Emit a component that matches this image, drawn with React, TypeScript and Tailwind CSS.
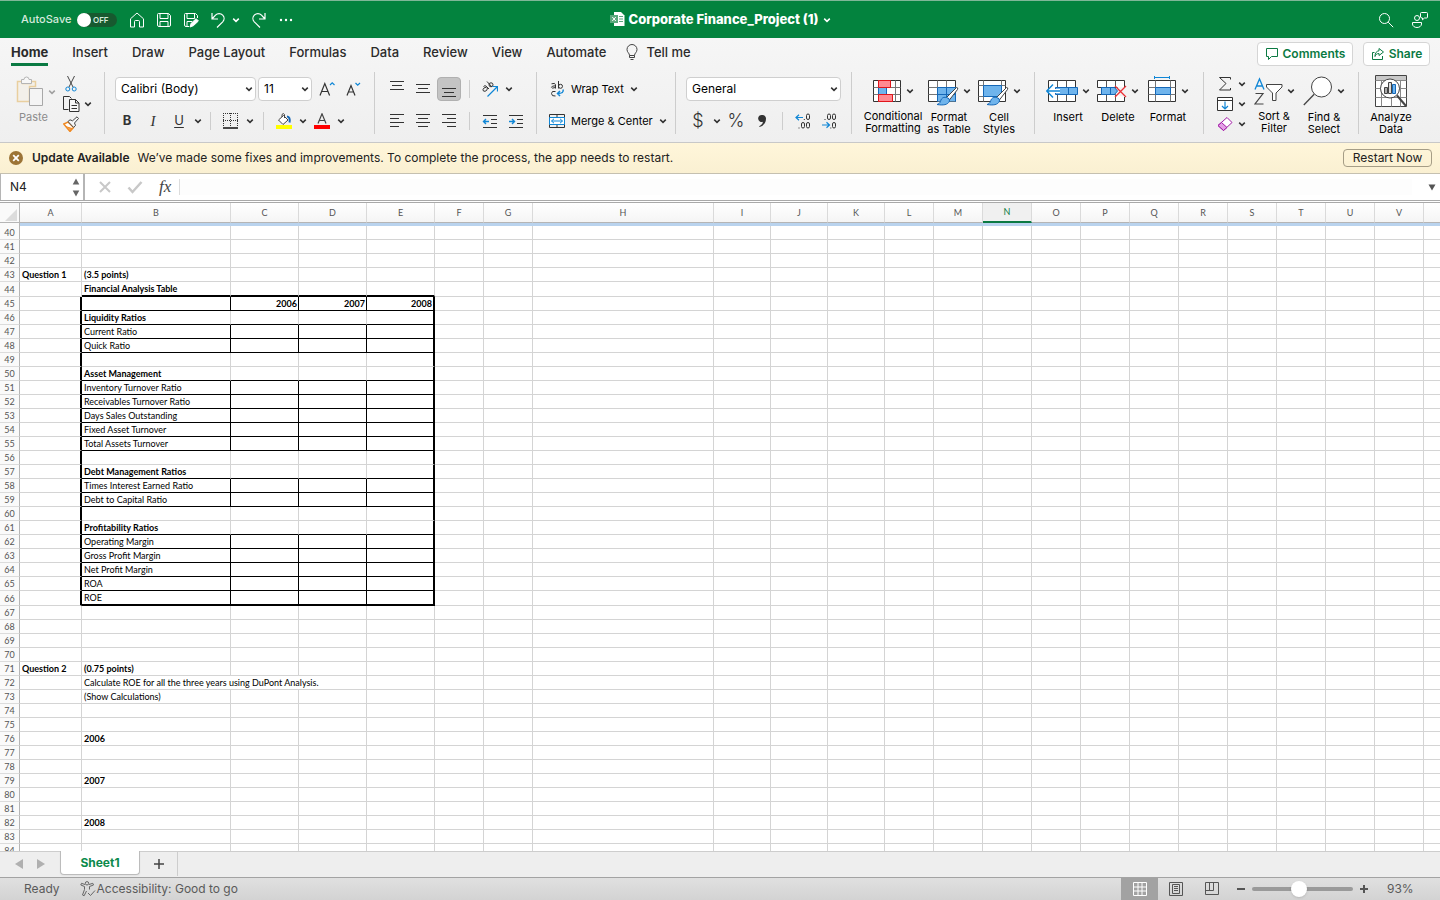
import type {ReactNode} from 'react';
import clsx from 'clsx';

const tabs = ['Home', 'Insert', 'Draw', 'Page Layout', 'Formulas', 'Data', 'Review', 'View', 'Automate'];

const columns = [
    {name: 'A', width: 'w-[62px]'},
    {name: 'B', width: 'w-[149px]'},
    {name: 'C', width: 'w-[68px]'},
    {name: 'D', width: 'w-[68px]'},
    {name: 'E', width: 'w-[68px]'},
    {name: 'F', width: 'w-[49px]'},
    {name: 'G', width: 'w-[49px]'},
    {name: 'H', width: 'w-[181px]'},
    {name: 'I', width: 'w-[57px]'},
    {name: 'J', width: 'w-[57px]'},
    {name: 'K', width: 'w-[57px]'},
    ...['L', 'M', 'N', 'O', 'P', 'Q', 'R', 'S', 'T', 'U', 'V'].map((name) => ({name, width: 'w-[49px]'})),
    {name: '', width: 'w-auto'},
];

const rows = Array.from({length: 45}, (_, i) => i + 40);

const cells: Record<string, string> = {
    A43: 'Question 1',
    B43: '(3.5 points)',
    B44: 'Financial Analysis Table',
    C45: '2006',
    D45: '2007',
    E45: '2008',
    B46: 'Liquidity Ratios',
    B47: 'Current Ratio',
    B48: 'Quick Ratio',
    B50: 'Asset Management',
    B51: 'Inventory Turnover Ratio',
    B52: 'Receivables Turnover Ratio',
    B53: 'Days Sales Outstanding',
    B54: 'Fixed Asset Turnover',
    B55: 'Total Assets Turnover',
    B57: 'Debt Management Ratios',
    B58: 'Times Interest Earned Ratio',
    B59: 'Debt to Capital Ratio',
    B61: 'Profitability Ratios',
    B62: 'Operating Margin',
    B63: 'Gross Profit Margin',
    B64: 'Net Profit Margin',
    B65: 'ROA',
    B66: 'ROE',
    A71: 'Question 2',
    B71: '(0.75 points)',
    B72: 'Calculate ROE for all the three years using DuPont Analysis.',
    B73: '(Show Calculations)',
    B76: '2006',
    B79: '2007',
    B82: '2008',
};

const boldRows = [43, 44, 45, 46, 50, 57, 61, 71, 76, 79, 82];
const headingRows = [46, 49, 50, 56, 57, 60, 61];
const openRows = [49, 56, 60];

function cellBorder(col: string, row: number) {
    const inTable = row >= 45 && row <= 66;
    const tableCol = 'BCDE'.includes(col) && col !== '';
    let right = col === '' ? '' : 'border-r border-r-[#d4d4d4]';
    let bottom = 'border-b border-b-[#d4d4d4]';
    if (inTable && (col === 'A' || col === 'E')) {
        right = 'border-r-2 border-r-black';
    } else if (inTable && tableCol && !headingRows.includes(row)) {
        right = 'border-r border-r-black';
    }
    if (tableCol && (row === 44 || row === 66)) {
        bottom = 'border-b-2 border-b-black';
    } else if (inTable && tableCol && !openRows.includes(row)) {
        bottom = 'border-b border-b-black';
    }
    return clsx(right, bottom);
}

function Caret({className = 'text-[#333]'}: {className?: string}) {
    return (
        <svg className={clsx('h-2 w-2 shrink-0', className)} viewBox="0 0 8 8" fill="none" stroke="currentColor" strokeWidth="1.5">
            <path d="M1.2 2.6 4 5.4 6.8 2.6"/>
        </svg>
    );
}

function CaretButton({label}: {label: string}) {
    return (
        <button aria-label={label} className="flex h-6 w-3.5 items-center justify-center">
            <Caret/>
        </button>
    );
}

function ToolButton({label, active, children}: {label: string; active?: boolean; children: ReactNode}) {
    return (
        <button
            aria-label={label}
            className={clsx('flex h-6 w-6 shrink-0 items-center justify-center rounded-sm text-[#333]', active && 'border border-[#b0b0b0] bg-[#c4c4c4]')}
        >
            {children}
        </button>
    );
}

function Divider() {
    return <div className="h-[18px] w-px shrink-0 bg-[#cdcdcd]"/>;
}

function Group({className, children}: {className: string; children: ReactNode}) {
    return <div className={clsx('flex h-[62px] shrink-0 border-r border-[#cdcdcd]', className)}>{children}</div>;
}

function Picker({label, value, className}: {label: string; value: string; className: string}) {
    return (
        <div className={clsx('relative', className)}>
            <select
                aria-label={label}
                defaultValue={value}
                className="h-6 w-full appearance-none rounded-sm border border-[#cfcfcf] bg-white px-[5px] text-xs text-black"
            >
                <option>{value}</option>
            </select>
            <Caret className="pointer-events-none absolute top-2 right-[3px] text-[#333]"/>
        </div>
    );
}

function BigButton({lines, width, caret = true, children}: {lines: string[]; width: string; caret?: boolean; children: ReactNode}) {
    return (
        <button className={clsx('flex shrink-0 flex-col items-center pt-1', width)}>
            <span className="flex h-[30px] items-center justify-center gap-1">
                {children}
                {caret && <Caret/>}
            </span>
            <span className="mt-[5px] flex flex-col text-[11px] leading-3 whitespace-nowrap text-black">
                {lines.map((line) => <span key={line}>{line}</span>)}
            </span>
        </button>
    );
}

function AlignIcon({lines}: {lines: number[][]}) {
    return (
        <svg className="h-4 w-4" viewBox="0 0 16 16" stroke="#333" strokeWidth="1">
            {lines.map(([x1, x2, y]) => <path key={y} d={`M${x1} ${y}.5H${x2}`}/>)}
        </svg>
    );
}

function IndentIcon({out}: {out?: boolean}) {
    return (
        <svg className="h-4 w-4" viewBox="0 0 16 16" fill="none" stroke="#333">
            <path d="M1 2.5h14M9 6.5h6M9 10.5h6M1 14.5h14"/>
            <path d={out ? 'M7 8.5H1.5M4 6 1.5 8.5 4 11' : 'M1 8.5h5.5M4 6l2.5 2.5L4 11'} stroke="#0f86d6" strokeWidth="1.4"/>
        </svg>
    );
}

function TitleBar() {
    return (
        <header className="flex h-[38px] shrink-0 items-center border-t border-[#7fb797] bg-[#03833e] text-white">
            <div className="flex flex-1 items-center">
                <label htmlFor="autosave" className="ml-[21px] w-14 shrink-0 text-[11px] font-medium text-[#d5eadd]">AutoSave</label>
                <span className="relative flex h-3.5 w-10 shrink-0 items-center rounded-full bg-[#17592f]">
                    <input id="autosave" type="checkbox" className="absolute inset-0 appearance-none"/>
                    <span className="h-3.5 w-3.5 rounded-full bg-white"/>
                    <span className="ml-0.5 text-[8px] font-semibold text-[#d5eadd]">OFF</span>
                </span>
                <div className="ml-3 flex items-center gap-[11px]">
                    <button aria-label="Home">
                        <svg className="h-4 w-4" viewBox="0 0 16 16" fill="none" stroke="white">
                            <path d="M1.5 6.8 8 1l6.5 5.800V15h-4V9.500a1 1 0 0 0-1-1h-3a1 1 0 0 0-1 1V15h-4Z"/>
                        </svg>
                    </button>
                    <button aria-label="Save">
                        <svg className="h-4 w-4" viewBox="0 0 16 16" fill="none" stroke="white">
                            <path d="M2.5 1.5h10l2 2v9.500a1.500 1.500 0 0 1-1.500 1.500H3A1.500 1.500 0 0 1 1.500 13V2.500a1 1 0 0 1 1-1ZM4 1.500v5h8v-5M4 14.500v-5h8v5"/>
                        </svg>
                    </button>
                    <button aria-label="Save As">
                        <svg className="h-4 w-4" viewBox="0 0 16 16" fill="none" stroke="white">
                            <path d="M6 14.500H3A1.500 1.500 0 0 1 1.500 13V2.500a1 1 0 0 1 1-1h10l2 2V6M4 1.500v5h7.500v-5M4 14.500v-5h5"/>
                            <path d="m7 15 1.200-3.800 5-4.500 2.200 2.300-5 4.700Z" fill="white"/>
                        </svg>
                    </button>
                    <button aria-label="Undo" className="flex items-center gap-1.5">
                        <svg className="h-4 w-4" viewBox="0 0 16 16" fill="none" stroke="white" strokeWidth="1.2">
                            <path d="M2 1v6h6M2 7l3.500-3.800a5 5 0 0 1 7.200 0c2 2 1.700 4.800 0 6.600L7 15.500"/>
                        </svg>
                        <Caret className="text-white"/>
                    </button>
                    <button aria-label="Redo">
                        <svg className="h-4 w-4" viewBox="0 0 16 16" fill="none" stroke="white" strokeWidth="1.2">
                            <path d="M14 1v6H8M14 7l-3.500-3.800a5 5 0 0 0-7.200 0c-2 2-1.700 4.800 0 6.600L9 15.500"/>
                        </svg>
                    </button>
                    <button aria-label="More">
                        <svg className="h-4 w-4" viewBox="0 0 16 16" fill="white">
                            <circle cx="3" cy="8" r="1.2"/>
                            <circle cx="8" cy="8" r="1.2"/>
                            <circle cx="13" cy="8" r="1.2"/>
                        </svg>
                    </button>
                </div>
            </div>
            <button className="flex items-center gap-1 text-[13px] font-extrabold">
                <svg className="h-[15px] w-[15px]" viewBox="0 0 15 15">
                    <path d="M4 0h7l3.500 3.500V14H4Z" fill="#fff"/>
                    <path d="M9 4.500h4M9 7h4M9 9.500h4" stroke="#5aa87c"/>
                    <path d="M0 3h8v8H0Z" fill="#5aa87c"/>
                    <path d="m2.300 5 3.500 4M5.800 5 2.300 9" stroke="#fff"/>
                </svg>
                <span>Corporate Finance_Project (1)</span>
                <Caret className="text-white"/>
            </button>
            <div className="flex flex-1 items-center justify-end gap-[18px]">
                <button aria-label="Search">
                    <svg className="h-4 w-4" viewBox="0 0 16 16" fill="none" stroke="white">
                        <circle cx="6.500" cy="6.500" r="5"/>
                        <path d="m10.200 10.200 5 5"/>
                    </svg>
                </button>
                <button aria-label="Share presence" className="mr-3">
                    <svg className="h-4 w-4" viewBox="0 0 16 16" fill="none" stroke="white">
                        <circle cx="5" cy="6" r="2.500"/>
                        <path d="M.5 10.500h9v1.500c0 2-2 3.500-4.500 3.500S.5 14 .5 12ZM8.500 1.500q0-1 1-1h5q1 0 1 1v3.500q0 1-1 1h-2l-2 1.800V6q-2 0-2-1Z"/>
                    </svg>
                </button>
            </div>
        </header>
    );
}

function RibbonTabs() {
    return (
        <nav className="flex h-8 shrink-0 items-start pr-[10px] pl-[11px] text-[13px] font-medium text-[#2b2b2b]">
            <div className="flex gap-6">
                {tabs.map((tab) => (
                    <a
                        key={tab}
                        href="#"
                        className={clsx('h-7 border-b-[3px] pt-1 leading-5 whitespace-nowrap', tab === 'Home' ? 'border-[#0b7a43] font-bold' : 'border-transparent')}
                    >
                        {tab}
                    </a>
                ))}
            </div>
            <button className="ml-5 flex items-center gap-2 pt-1 leading-5">
                <svg className="h-4 w-3" viewBox="0 0 12 16" fill="none" stroke="#444">
                    <path d="M3.500 11.500C3.500 9 1 8.500 1 5.500a5 5 0 0 1 10 0c0 3-2.500 3.500-2.500 6ZM3.500 11.500v2h5v-2M4.500 15.500h3"/>
                </svg>
                Tell me
            </button>
            <div className="ml-auto flex gap-[10px] pt-1 font-semibold text-[#0b7a43]">
                <button className="flex h-6 w-24 items-center justify-center gap-1 rounded-sm border border-[#d5d5d5] bg-white text-xs">
                    <svg className="h-3.5 w-3.5" viewBox="0 0 14 14" fill="none" stroke="#0b7a43">
                        <path d="M1.500 1.500h11v8h-6l-3 3v-3h-2Z"/>
                    </svg>
                    Comments
                </button>
                <button className="flex h-6 w-[67px] items-center justify-center gap-1 rounded-sm border border-[#d5d5d5] bg-white text-xs">
                    <svg className="h-3.5 w-3.5" viewBox="0 0 14 14" fill="none" stroke="#0b7a43">
                        <path d="M3.500 5.500h-2v7h10V9"/>
                        <path d="M8 1.500 12.500 5 8 8.500v-2C6 6.500 4.500 7.500 4 9.500 4 6 5.500 4 8 3.800Z"/>
                    </svg>
                    Share
                </button>
            </div>
        </nav>
    );
}

function BrushOverlay() {
    return (
        <>
            <path d="M28.500 8.500q2 0 1 2l-8.500 11-3-2.500Z" fill="#fff" stroke="#444"/>
            <path d="M18.500 18.500q3.500.5 3 3.500c-1.500 4-6.500 4.500-12.500 3.500 3.500-1 3-3 4.500-5.500 1.500-1.800 3-2 5-1.500Z" fill="#6fb4ec" stroke="#1568b8"/>
        </>
    );
}

function Ribbon() {
    return (
        <section className="flex h-[73px] shrink-0 overflow-hidden border-b border-[#c8c8c8] pt-0.5 text-[11px]">
            <Group className="w-[105px]">
                <button className="flex w-[59px] flex-col items-end pt-1 text-[#8c8c8c]">
                    <span className="flex h-[31px] items-center">
                        <svg className="h-[31px] w-7" viewBox="0 0 28 31" fill="none">
                            <path d="M1.500 5.500h5v2h8v-2h5v5h-6v15h-12Z" fill="#f3f0ea" stroke="#e9cf9f" strokeWidth="1.5"/>
                            <path d="M5.500 7.500v-4H8a2.500 2.500 0 0 1 5 0h2.500v4Z" fill="#f7f7f7" stroke="#b5b5b5"/>
                            <path d="M13.500 12.500h13v17h-13Z" fill="#f4f4f4" stroke="#a8a8a8"/>
                        </svg>
                        <Caret className="ml-1 mr-[3px] text-[#a0a0a0]"/>
                    </span>
                    <span className="mt-1 mr-[11px] leading-3">Paste</span>
                </button>
                <div className="flex flex-col pt-0.5 pl-1">
                    <button aria-label="Cut" className="flex h-[21px] items-center">
                        <svg className="h-4 w-4" viewBox="0 0 16 16" fill="none" stroke="#444">
                            <path d="M4.500 0 10 11M11.500 0 6 11"/>
                            <circle cx="4.800" cy="13" r="2" stroke="#0f86d6"/>
                            <circle cx="11.200" cy="13" r="2" stroke="#0f86d6"/>
                        </svg>
                    </button>
                    <button aria-label="Copy" className="flex h-[21px] items-center gap-1">
                        <svg className="h-4 w-[17px]" viewBox="0 0 17 16" fill="none" stroke="#333">
                            <path d="M5.500 13.500h-5V.5h6l2 2"/>
                            <path d="M6.500 3.500h6l3.500 3.500v8.500H6.500ZM12.500 3.500V7H16M8.500 9.500H14M8.500 12.500H14" fill="#f7f7f7"/>
                        </svg>
                        <Caret/>
                    </button>
                    <button aria-label="Format Painter" className="flex h-[21px] items-center">
                        <svg className="h-4 w-4" viewBox="0 0 16 16" fill="none">
                            <path d="M.8 8 5 6l5.500 5.500L7 15.500Z" fill="#fff" stroke="#f08a24" strokeWidth="1.4"/>
                            <path d="M2.500 10.500 9 12.500 7 15.200Z" fill="#f6a04a" stroke="#f08a24"/>
                            <path d="M5 5.500 7 3.800l2.500 1L14 .8l1.500 1.700-4 4.500 1 2.500-2 1.800Z" fill="#f7f7f7" stroke="#444"/>
                        </svg>
                    </button>
                </div>
            </Group>

            <Group className="w-[270px] flex-col gap-2 pt-[5px]">
                <div className="flex items-center pl-[10px]">
                    <Picker label="Font" value="Calibri (Body)" className="w-[141px]"/>
                    <Picker label="Font size" value="11" className="ml-0.5 w-[54px]"/>
                    <div className="ml-[3px] flex gap-0.5">
                        <ToolButton label="Increase font size">
                            <svg className="h-4 w-4" viewBox="0 0 16 16" fill="none" stroke="#333" strokeWidth="1.2">
                                <path d="M1 14.500 5.800 2.500l4.800 12M2.700 10.500H9"/>
                                <path d="m11 4 2.200-2.200L15.500 4" stroke="#0f86d6"/>
                            </svg>
                        </ToolButton>
                        <ToolButton label="Decrease font size">
                            <svg className="h-4 w-4" viewBox="0 0 16 16" fill="none" stroke="#333" strokeWidth="1.2">
                                <path d="M2 14.500 6 4.500l4 10M3.500 11H8.500"/>
                                <path d="m10.500 2 2.200 2.200L15 2" stroke="#0f86d6"/>
                            </svg>
                        </ToolButton>
                    </div>
                </div>
                <div className="flex items-center pl-[10px]">
                    <div className="flex gap-0.5">
                        <ToolButton label="Bold"><span className="text-[13px] font-bold">B</span></ToolButton>
                        <ToolButton label="Italic"><span className="font-['Liberation_Serif'] text-[15px] italic">I</span></ToolButton>
                        <ToolButton label="Underline"><span className="text-[13px] underline underline-offset-2">U</span></ToolButton>
                    </div>
                    <CaretButton label="Underline options"/>
                    <div className="ml-[5px]"><Divider/></div>
                    <div className="ml-2 flex">
                        <ToolButton label="Borders">
                            <svg className="h-4 w-4" viewBox="0 0 16 16" fill="none" stroke="#333">
                                <path d="M.5 0v14M7.500 0v14M14.500 0v14M0 .5h15M0 7.500h15" strokeDasharray="1 1"/>
                                <path d="M0 15h15" stroke="#111" strokeWidth="1.500"/>
                            </svg>
                        </ToolButton>
                        <CaretButton label="Border options"/>
                    </div>
                    <div className="ml-1.5"><Divider/></div>
                    <div className="ml-2 flex">
                        <ToolButton label="Fill color">
                            <svg className="h-4 w-4" viewBox="0 0 16 16" fill="none">
                                <path d="M7.500 2.500 12 7l-5 4.500L2.500 7Z" fill="#fff" stroke="#444"/>
                                <path d="M6 4V1.500q1.500-2 2.500 0V5" stroke="#444"/>
                                <path d="M11 3.500q3.500.5 2.500 6" stroke="#1568b8" strokeWidth="2"/>
                                <path d="M0 12h16v4H0Z" fill="#ffff00"/>
                            </svg>
                        </ToolButton>
                        <CaretButton label="Fill color options"/>
                        <ToolButton label="Font color">
                            <svg className="h-4 w-4" viewBox="0 0 16 16" fill="none">
                                <path d="M4 10.500 8 .8l4 9.700M5.500 7.500h5" stroke="#444" strokeWidth="1.200"/>
                                <path d="M0 12h16v4H0Z" fill="#ff0000"/>
                            </svg>
                        </ToolButton>
                        <CaretButton label="Font color options"/>
                    </div>
                </div>
            </Group>

            <Group className="w-[162px] flex-col gap-2 pt-[5px]">
                <div className="flex items-center gap-2 pl-[10px]">
                    <div className="flex gap-0.5">
                        <ToolButton label="Top align"><AlignIcon lines={[[1, 15, 0], [3, 13, 4], [1, 15, 8]]}/></ToolButton>
                        <ToolButton label="Middle align"><AlignIcon lines={[[1, 15, 3], [3, 13, 7], [1, 15, 11]]}/></ToolButton>
                        <ToolButton label="Bottom align" active><AlignIcon lines={[[1, 15, 7], [3, 13, 11], [1, 15, 15]]}/></ToolButton>
                    </div>
                    <Divider/>
                    <div className="flex">
                        <ToolButton label="Orientation">
                            <svg className="h-4 w-4" viewBox="0 0 16 16" fill="none" stroke="#333">
                                <path d="M1.500 5.500q1.500-1.500 2.700-.3L7 8M4.800 6q-3.500.5-3.800 2.500t2 1.800T5.500 6.800"/>
                                <path d="m5 .5 5 5.500"/>
                                <circle cx="9" cy="3.800" r="2"/>
                                <path d="M5.500 15.500 15 6M10.500 5.500H15.500V10.500" stroke="#0f86d6" strokeWidth="1.200"/>
                            </svg>
                        </ToolButton>
                        <CaretButton label="Orientation options"/>
                    </div>
                </div>
                <div className="flex items-center gap-2 pl-[10px]">
                    <div className="flex gap-0.5">
                        <ToolButton label="Align left"><AlignIcon lines={[[1, 15, 1], [1, 10, 5], [1, 15, 9], [1, 10, 13]]}/></ToolButton>
                        <ToolButton label="Center"><AlignIcon lines={[[1, 15, 1], [3, 13, 5], [1, 15, 9], [3, 13, 13]]}/></ToolButton>
                        <ToolButton label="Align right"><AlignIcon lines={[[1, 15, 1], [6, 15, 5], [1, 15, 9], [6, 15, 13]]}/></ToolButton>
                    </div>
                    <Divider/>
                    <div className="flex gap-0.5">
                        <ToolButton label="Decrease indent"><IndentIcon out/></ToolButton>
                        <ToolButton label="Increase indent"><IndentIcon/></ToolButton>
                    </div>
                </div>
            </Group>

            <Group className="w-[139px] flex-col gap-2 pt-[5px] pl-3">
                <button className="flex h-6 items-center gap-1.5 whitespace-nowrap text-black">
                    <svg className="h-4 w-4" viewBox="0 0 16 16" fill="none" stroke="#333">
                        <path d="M2.500 2.800q4-1.300 4 1V7.500M6.500 4.800Q2.500 4.800 2.500 6.300T6.500 6.500M9.500 0v7.500"/>
                        <circle cx="11.500" cy="5.300" r="2"/>
                        <path d="M6.500 10.500Q2.500 9.500 2.500 12.500t4 2.500"/>
                        <path d="M14 8.500q1.500 4-5.500 4M11 10l-2.500 2.500L11 15" stroke="#0f86d6" strokeWidth="1.500"/>
                    </svg>
                    Wrap Text
                    <Caret/>
                </button>
                <button className="flex h-6 items-center gap-1.5 whitespace-nowrap text-black">
                    <svg className="h-4 w-4" viewBox="0 0 16 16" fill="none" stroke="#333">
                        <path d="M.5 1.500h15v13H.5ZM8 1.500v3M8 11.500v3"/>
                        <path d="M.5 4.500h15v7H.5Z" stroke="#0f86d6" fill="#fff"/>
                        <path d="M2.500 8h11M5 5.800 2.500 8 5 10.200M11 5.800 13.500 8 11 10.200" stroke="#0f86d6"/>
                    </svg>
                    Merge &amp; Center
                    <Caret/>
                </button>
            </Group>

            <Group className="w-[176px] flex-col gap-2 pt-[5px] pl-[10px]">
                <Picker label="Number format" value="General" className="w-[155px]"/>
                <div className="flex items-center">
                    <ToolButton label="Currency"><span className="text-lg font-light">$</span></ToolButton>
                    <CaretButton label="Currency options"/>
                    <ToolButton label="Percent"><span className="text-lg font-light">%</span></ToolButton>
                    <div className="ml-0.5">
                        <ToolButton label="Comma style">
                            <svg className="h-4 w-4" viewBox="0 0 16 16" fill="#333">
                                <path d="M8.300 2a3.500 3.500 0 0 1 3.700 3.700c0 4-2.500 7-6.500 8.300l-.3-.8c2.300-1.200 3.500-2.500 3.700-4.500A3.500 3.500 0 1 1 8.300 2Z"/>
                            </svg>
                        </ToolButton>
                    </div>
                    <div className="mx-2"><Divider/></div>
                    <div className="flex gap-0.5">
                        <ToolButton label="Increase decimal">
                            <svg className="h-4 w-4" viewBox="0 0 16 16" fill="none" stroke="#333">
                                <path d="M8 4.500H1M4 1.800 1 4.500l3 2.700" stroke="#0f86d6" strokeWidth="1.200"/>
                                <rect x="11.500" y="1" width="3" height="5.500" rx="1.500"/>
                                <rect x="6.500" y="9.500" width="3" height="5.500" rx="1.500"/>
                                <rect x="11.500" y="9.500" width="3" height="5.500" rx="1.500"/>
                                <path d="M8.800 6.500h1M3.500 15h1"/>
                            </svg>
                        </ToolButton>
                        <ToolButton label="Decrease decimal">
                            <svg className="h-4 w-4" viewBox="0 0 16 16" fill="none" stroke="#333">
                                <path d="M1 12h7M5.500 9.300l3 2.700-3 2.700" stroke="#0f86d6" strokeWidth="1.200"/>
                                <rect x="6.500" y="1" width="3" height="5.500" rx="1.500"/>
                                <rect x="11.500" y="1" width="3" height="5.500" rx="1.500"/>
                                <rect x="11.500" y="9.500" width="3" height="5.500" rx="1.500"/>
                                <path d="M3.500 6.500h1M9.300 15h1"/>
                            </svg>
                        </ToolButton>
                    </div>
                </div>
            </Group>

            <Group className="w-[183px] pl-[10px]">
                <BigButton lines={['Conditional', 'Formatting']} width="w-[62px]">
                    <svg className="h-6 w-[29px]" viewBox="0 -1 29 24" fill="none">
                        <path d="M.5.5h27v21H.5Z" fill="#fff" stroke="#333"/>
                        <path d="M5.500.5v21M22.500.5v21M.5 7.500h27M.5 14.500h27" stroke="#777"/>
                        <path d="M5.500 7.500h8v7h-8Z" fill="#6fb4ec" stroke="#1568b8"/>
                        <path d="M5.500.5h12v7h-12ZM5.500 14.500h14v7h-14Z" fill="#ff8a92" stroke="#e0151b"/>
                    </svg>
                </BigButton>
                <BigButton lines={['Format', 'as Table']} width="w-[50px]">
                    <svg className="h-[30px] w-[31px]" viewBox="0 -3 31 30" fill="none">
                        <path d="M.5 1.500h27v21H.5Z" fill="#fff" stroke="#333"/>
                        <path d="M9.500 8.500h18v14h-18Z" fill="#6fb4ec"/>
                        <path d="M9.500 1.500v7M18.500 1.500v7M.5 8.500h9M.5 15.500h9" stroke="#777"/>
                        <path d="M9.500 22.500v-14h18v14M18.500 8.500v14M9.500 15.500h18" stroke="#1568b8"/>
                        <BrushOverlay/>
                    </svg>
                </BigButton>
                <BigButton lines={['Cell', 'Styles']} width="w-[50px]">
                    <svg className="h-[30px] w-[31px]" viewBox="0 -3 31 30" fill="none">
                        <path d="M.5 1.500h27v21H.5Z" fill="#fff" stroke="#333"/>
                        <path d="M5.500 1.500v21M.5 6.500h27M23.500 1.500v5M.5 17.500h5" stroke="#777"/>
                        <path d="M5.500 6.500h18v11h-18Z" fill="#6fb4ec" stroke="#1568b8"/>
                        <BrushOverlay/>
                    </svg>
                </BigButton>
            </Group>

            <Group className="w-[169px] pl-2">
                <BigButton lines={['Insert']} width="w-[50px]">
                    <svg className="h-6 w-8" viewBox="0 -1 32 24" fill="none">
                        <path d="M2.500.5h27v21h-27Z" fill="#fff" stroke="#333"/>
                        <path d="M11.500.5v21M20.500.5v21" stroke="#555"/>
                        <path d="M9.500 7.500h22v7h-22ZM22.500 7.500v7" fill="#6fb4ec" stroke="#1568b8"/>
                        <path d="M14 11H2" stroke="#fff" strokeWidth="4"/>
                        <path d="M14 11H1M7 4.500.8 11 7 17.500" stroke="#0f86d6" strokeWidth="1.400"/>
                    </svg>
                </BigButton>
                <BigButton lines={['Delete']} width="w-[50px]">
                    <svg className="h-6 w-[30px]" viewBox="0 -1 30 24" fill="none">
                        <path d="M27.500 7V.5H.5v7h20M27.500 17v4.500H.5v-7h18" fill="#fff" stroke="#333"/>
                        <path d="M9.500.5v7M18.500.5v7M9.500 14.500v7M18.500 14.500v7" stroke="#555"/>
                        <path d="M4.500 7.500h13l3 3.500-3 3.500h-13ZM13.500 7.500v7" fill="#6fb4ec" stroke="#1568b8"/>
                        <path d="m18 6 11 11M29 6 18 17" stroke="#ec2f36" strokeWidth="1.300"/>
                    </svg>
                </BigButton>
                <BigButton lines={['Format']} width="w-[50px]">
                    <svg className="h-[30px] w-[29px]" viewBox="0 2 29 30" fill="none">
                        <path d="M.5 6.500h27v21H.5Z" fill="#fff" stroke="#333"/>
                        <path d="M7.500 6.500v21M22.500 6.500v21M.5 13.500h27M.5 20.500h27" stroke="#777"/>
                        <path d="M7.500 13.500h15v7h-15Z" fill="#6fb4ec" stroke="#1568b8"/>
                        <path d="M6.500 3.500h15M6.500 2v3M21.500 2v3" stroke="#0f86d6"/>
                    </svg>
                </BigButton>
            </Group>

            <Group className="w-[155px] pl-[13px]">
                <div className="flex w-8 flex-col pt-0.5">
                    <button aria-label="AutoSum" className="flex h-[21px] items-center gap-[5px]">
                        <svg className="h-4 w-4" viewBox="0 0 16 16" fill="none" stroke="#333">
                            <path d="M13.500 3.500v-2h-11L9 7.500l-6.500 6.500h11v-2"/>
                        </svg>
                        <Caret/>
                    </button>
                    <button aria-label="Fill" className="flex h-[21px] items-center gap-[5px]">
                        <svg className="h-4 w-4" viewBox="0 0 16 16" fill="none">
                            <path d="M.5 1.500h15v13H.5ZM.5 4.500h15" fill="#fff" stroke="#333"/>
                            <path d="M8 5.500v7M5 10l3 3 3-3" stroke="#0f86d6" strokeWidth="1.200"/>
                        </svg>
                        <Caret/>
                    </button>
                    <button aria-label="Clear" className="flex h-[21px] items-center gap-[5px]">
                        <svg className="h-4 w-4" viewBox="0 0 16 16" fill="none" stroke="#a31aa8">
                            <path d="m10 1.500 5 5-8.500 8-5.500-5Z" fill="#fff"/>
                            <path d="m4.500 6.500 5.500 5-3.500 3-5.500-5Z" fill="#e3a0e5"/>
                        </svg>
                        <Caret/>
                    </button>
                </div>
                <BigButton lines={['Sort &', 'Filter']} width="w-[50px]">
                    <svg className="h-7 w-[29px]" viewBox="0 0 29 28" fill="none">
                        <path d="M1 12.500 5.500 2 10 12.500M2.500 9h6" stroke="#0f86d6" strokeWidth="1.300"/>
                        <path d="M1.500 16.500h7.500l-8 10.500h8.500" stroke="#444" strokeWidth="1.200"/>
                        <path d="M12.500 7.500h15.500v2.500l-6 6v7.500h-3.500V16l-6-6Z" fill="#fff" stroke="#444"/>
                    </svg>
                </BigButton>
                <BigButton lines={['Find &', 'Select']} width="w-[50px]">
                    <svg className="h-[30px] w-[30px]" viewBox="0 0 30 30" fill="none" stroke="#444">
                        <circle cx="18.500" cy="11" r="10" fill="#fff"/>
                        <path d="M11.200 18.300.8 29" strokeWidth="1.300"/>
                    </svg>
                </BigButton>
            </Group>

            <div className="flex h-[62px] flex-1 pl-[7px]">
                <BigButton lines={['Analyze', 'Data']} width="w-[50px]" caret={false}>
                    <svg className="h-8 w-8" viewBox="0 0 32 32" fill="none" stroke="#444">
                        <path d="M.5.5h31v31H.5Z" fill="#fff"/>
                        <path d="M1 1h30v4H1Z" fill="#c8c8c8" stroke="none"/>
                        <path d="M.5 5.500h31M.5 13.500h31M.5 22.500h31M6.500 5.500v26M16.500 22v9.500M25.500 5.500v26" stroke="#888"/>
                        <circle cx="15" cy="13.500" r="9.500" fill="#fff"/>
                        <path d="m22 20.500 9 10.500" strokeWidth="2"/>
                        <path d="M9.500 12.500h3v6h-3Z" fill="#aaa"/>
                        <path d="M13.500 7.500h3v11h-3Z" fill="#ddd"/>
                        <path d="M17.500 9.500h3v9h-3Z" fill="#6fb4ec" stroke="#1568b8"/>
                    </svg>
                </BigButton>
            </div>
        </section>
    );
}

function UpdateBanner() {
    return (
        <div className="flex h-[31px] shrink-0 items-center border-b border-[#c5c0b0] bg-linear-to-b from-[#fff6da] to-[#faf0d2] px-2 text-xs text-[#222]">
            <svg className="h-4 w-4" viewBox="0 0 16 16">
                <circle cx="8" cy="8" r="7" fill="#9c7436"/>
                <path d="m5.200 5.200 5.600 5.600M10.800 5.200l-5.600 5.600" stroke="#fff" strokeWidth="1.800"/>
            </svg>
            <strong className="ml-2 font-semibold">Update Available</strong>
            <span className="ml-2">We’ve made some fixes and improvements. To complete the process, the app needs to restart.</span>
            <button className="ml-auto h-[18px] w-[89px] rounded-sm border border-[#a59d86] leading-4">Restart Now</button>
        </div>
    );
}

function FormulaBar() {
    return (
        <div className="flex h-[27px] shrink-0 items-center border-b border-[#a9a9a9] bg-white">
            <div className="flex h-full w-[85px] items-center border-r-2 border-l border-[#b5b5b5] pl-[9px]">
                <input aria-label="Name box" defaultValue="N4" className="w-[62px] bg-transparent text-xs text-[#222]"/>
                <svg className="h-5 w-2" viewBox="0 0 8 20" fill="#666">
                    <path d="M4 1.500 7.300 7.500H.7ZM4 19.500.7 13.500h6.600Z"/>
                </svg>
            </div>
            <button aria-label="Cancel" className="ml-3">
                <svg className="h-4 w-4" viewBox="0 0 16 16" stroke="#c8c8c8" strokeWidth="2">
                    <path d="m3 3 10 10M13 3 3 13"/>
                </svg>
            </button>
            <button aria-label="Enter" className="ml-3.5">
                <svg className="h-4 w-4" viewBox="0 0 16 16" fill="none" stroke="#c8c8c8" strokeWidth="2.500">
                    <path d="m1.500 8.500 4 4.500L14.500 3"/>
                </svg>
            </button>
            <button aria-label="Insert function" className="ml-4 font-['Liberation_Serif'] text-[17px] leading-5 text-[#444] italic">fx</button>
            <input aria-label="Formula" className="ml-2 h-4 min-w-0 flex-1 border-l border-[#dcdcdc] bg-[#fdfdfd] px-2 text-xs"/>
            <button aria-label="Expand formula bar" className="pr-1 pl-4">
                <svg className="h-2 w-2" viewBox="0 0 8 8" fill="#555">
                    <path d="M.5 1.500h7L4 7.500Z"/>
                </svg>
            </button>
        </div>
    );
}

function SheetRow({row}: {row: number}) {
    const isLong = row === 72;
    const visible = columns.filter(({name}) => !(isLong && (name === 'C' || name === 'D')));
    return (
        <tr className={row === 44 || row === 66 ? 'h-[15px]' : 'h-3.5'}>
            <th scope="row" className="border-r border-b border-r-[#b5b5b5] border-b-[#dcdcdc] bg-[#fafafa] p-0 text-center leading-[13px] font-normal text-[#555]">
                {row}
            </th>
            {visible.map(({name}) => (
                <td
                    key={name}
                    colSpan={isLong && name === 'B' ? 3 : 1}
                    className={clsx(
                        'overflow-hidden p-0 pl-0.5 leading-[13px] whitespace-nowrap text-black',
                        cellBorder(name, row),
                        boldRows.includes(row) && 'font-bold',
                        row === 45 && 'pr-px text-right',
                    )}
                >
                    {cells[name + row]}
                </td>
            ))}
        </tr>
    );
}

function Sheet() {
    return (
        <main className="mt-px min-h-0 flex-1 overflow-hidden border-t border-[#a9a9a9] bg-white">
            <table className="w-full table-fixed border-separate border-spacing-0 font-['Lato',sans-serif] text-[9px]">
                <colgroup>
                    <col className="w-5"/>
                    {columns.map(({name, width}) => <col key={name} className={width}/>)}
                </colgroup>
                <thead>
                    <tr className="h-5">
                        <th className="border-r border-b border-[#b5b5b5] bg-[#fafafa] p-0">
                            <button aria-label="Select all" className="flex h-4 w-full items-end justify-end pr-0.5">
                                <svg className="h-3 w-3" viewBox="0 0 12 12" fill="#dcdcdc"><path d="M12 0v12H0Z"/></svg>
                            </button>
                        </th>
                        {columns.map(({name}) => (
                            <th
                                key={name}
                                scope="col"
                                className={clsx(
                                    'p-0 leading-[18px] font-normal',
                                    name !== '' && 'border-r border-r-[#dadada]',
                                    name === 'N'
                                        ? 'border-b-2 border-b-[#0b7a43] bg-[#f0f0f0] font-bold text-[#0b7a43]'
                                        : 'border-b border-b-[#b5b5b5] bg-linear-to-b from-white to-[#f5f5f5] text-[#555]',
                                )}
                            >
                                {name}
                            </th>
                        ))}
                    </tr>
                    <tr className="h-[3px]">
                        <td className="border-r border-[#b5b5b5] bg-[#fafafa] p-0"/>
                        <td colSpan={23} className="bg-[#b9d3ee] p-0"/>
                    </tr>
                </thead>
                <tbody>
                    {rows.map((row) => <SheetRow key={row} row={row}/>)}
                </tbody>
            </table>
        </main>
    );
}

function SheetTabs() {
    return (
        <div className="flex h-[26px] shrink-0 items-start border-t border-[#cdcdcd] bg-[#eee]">
            <button aria-label="Previous sheet" className="flex h-6 items-center pl-3.5">
                <svg className="h-2.5 w-2.5" viewBox="0 0 10 10" fill="#b0b0b0"><path d="M9 0v10L1 5Z"/></svg>
            </button>
            <button aria-label="Next sheet" className="flex h-6 items-center pl-3">
                <svg className="h-2.5 w-2.5" viewBox="0 0 10 10" fill="#b0b0b0"><path d="M1 0v10l8-5Z"/></svg>
            </button>
            <button className="-mt-px ml-3.5 h-6 w-20 rounded-b-sm border-x border-b border-[#bcbcbc] bg-white pt-px text-xs font-bold text-[#0b8a4b] shadow-xs">
                Sheet1
            </button>
            <button aria-label="Add sheet" className="flex h-6 w-[38px] items-center justify-center border-r border-[#cdcdcd]">
                <svg className="h-3 w-3" viewBox="0 0 12 12" stroke="#444" strokeWidth="1.500"><path d="M6 1v10M1 6h10"/></svg>
            </button>
        </div>
    );
}

function StatusBar() {
    return (
        <footer className="flex h-[23px] shrink-0 items-center border-t border-[#a3a3a3] bg-linear-to-b from-[#e0e0e0] to-[#d3d3d3] pl-6 text-xs text-[#5a5a5a]">
            <span>Ready</span>
            <button className="ml-5 flex items-center gap-px">
                <svg className="h-4 w-4" viewBox="0 0 16 16" fill="none" stroke="#666">
                    <circle cx="7" cy="2.300" r="1.700"/>
                    <path d="M5 3.500 1.500 2.300.8 4 4.500 5.500v3L2.500 14l1.600.8L6.500 10M9 3.500l3.800-1.200.7 1.700-4 1.500v3"/>
                    <path d="m8 12 2.500 2.500 4.500-5"/>
                </svg>
                Accessibility: Good to go
            </button>
            <div className="ml-auto flex h-full items-center">
                <button aria-label="Normal view" className="flex h-full w-[37px] items-center justify-center bg-[#a2a2a2]">
                    <svg className="h-3.5 w-3.5" viewBox="0 0 14 14" fill="none" stroke="white">
                        <path d="M.5.5h13v13H.5ZM5 .5v13M9 .5v13M.5 5h13M.5 9h13"/>
                    </svg>
                </button>
                <button aria-label="Page layout view" className="flex w-9 items-center justify-center">
                    <svg className="h-3.5 w-3.5" viewBox="0 0 14 14" fill="none" stroke="#555">
                        <path d="M.5.5h13v13H.5ZM3.500 2.500h7v9h-7ZM5 4.500h4M5 6.500h4M5 8.500h4"/>
                    </svg>
                </button>
                <button aria-label="Page break view" className="flex w-9 items-center justify-center">
                    <svg className="h-3.5 w-3.5" viewBox="0 0 14 14" fill="none" stroke="#555">
                        <path d="M.5.5h13v12H.5ZM.5 8.500h8v-8M4.500.5v8"/>
                    </svg>
                </button>
                <button aria-label="Zoom out" className="ml-1.5 flex">
                    <svg className="h-2.5 w-2.5" viewBox="0 0 10 10" stroke="#555" strokeWidth="2"><path d="M1 5h8"/></svg>
                </button>
                <input
                    aria-label="Zoom"
                    type="range"
                    defaultValue="46"
                    className="mx-1.5 h-1 w-[101px] appearance-none rounded-full bg-[#9a9a9a] [&::-webkit-slider-thumb]:h-4 [&::-webkit-slider-thumb]:w-4 [&::-webkit-slider-thumb]:appearance-none [&::-webkit-slider-thumb]:rounded-full [&::-webkit-slider-thumb]:bg-white [&::-webkit-slider-thumb]:shadow-sm"
                />
                <button aria-label="Zoom in" className="flex">
                    <svg className="h-2.5 w-2.5" viewBox="0 0 10 10" stroke="#555" strokeWidth="2"><path d="M1 5h8M5 1v8"/></svg>
                </button>
                <span className="w-[71px] pl-[18px]">93%</span>
            </div>
        </footer>
    );
}

function App() {
    return (
        <div className="flex h-screen flex-col overflow-hidden bg-white font-['Inter',sans-serif]">
            <TitleBar/>
            <div className="flex shrink-0 flex-col bg-linear-to-b from-[#f6f6f6] to-[#efefef]">
                <RibbonTabs/>
                <Ribbon/>
            </div>
            <UpdateBanner/>
            <FormulaBar/>
            <Sheet/>
            <SheetTabs/>
            <StatusBar/>
        </div>
    );
}

export default App
